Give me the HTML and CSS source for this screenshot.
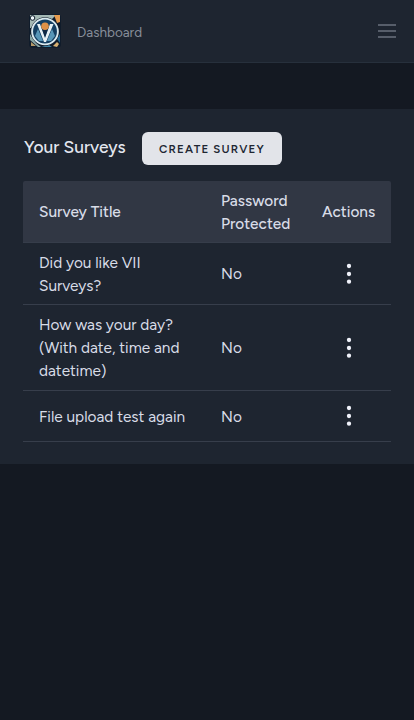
FILE: index.html
```html
<!DOCTYPE html>
<html lang="en">
<head>
<meta charset="utf-8">
<meta name="viewport" content="width=device-width, initial-scale=1">
<title>Dashboard</title>
<link rel="stylesheet" href="styles.css">
</head>
<body>
<header class="topbar">
  <svg class="logo" viewBox="0 0 32 34" aria-hidden="true">
    <defs><clipPath id="tile"><rect width="32" height="34" rx="4"/></clipPath></defs>
    <g clip-path="url(#tile)">
      <rect width="32" height="34" fill="#101c2b"/>
      <path d="M1 1H27L22 6H10L2 14H1Z" fill="#a4b8b4"/>
      <path d="M25 1H31V8L28 9Z" fill="#e59b4f"/>
      <path d="M1 20L7 29L12 33H9L1 26Z" fill="#87a5a4"/>
      <path d="M2 28L7 32H2Z" fill="#b49a69"/>
      <path d="M28 25L31 20V29Z" fill="#246992"/>
      <path d="M12 33L20 31L23 33Z" fill="#3c83a5"/>
      <path d="M24 32L28 28L30 30L28 33Z" fill="#d7b071"/>
      <circle cx="3.5" cy="4" r="2.3" fill="#eef6fa" stroke="#101c2b"/>
      <circle cx="16" cy="17.5" r="14.2" fill="#101c2b"/>
      <circle cx="16" cy="17.5" r="12.9" fill="#143f62" stroke="#d9e9ee" stroke-width="1.9"/>
      <path d="M6 22L9 15L14 27H10ZM26 22L23 15L18 27H22Z" fill="#5796b7"/>
      <path d="M8 10H11L16 24L21 10H24.5L17 28H15Z" fill="#e6f1f4"/>
      <path d="M12 12L16 23L20 12Z" fill="#102944"/>
      <circle cx="16" cy="12.3" r="3.8" fill="#dc9147"/>
    </g>
  </svg>
  <a class="nav-link">Dashboard</a>
  <svg class="menu" viewBox="0 0 18 16" aria-hidden="true"><path d="M0 2H18M0 8H18M0 14H18"/></svg>
</header>
<main class="panel">
  <div class="heading">
    <h1>Your Surveys</h1>
    <button class="create">CREATE SURVEY</button>
  </div>
  <div class="table">
    <div class="row head">
      <div>Survey Title</div><div>Password<br>Protected</div><div>Actions</div>
    </div>
    <div class="row">
      <div>Did you like VII<br>Surveys?</div><div>No</div>
      <svg class="dots" viewBox="0 0 6 22" aria-hidden="true"><circle cx="3" cy="3" r="2.15"/><circle cx="3" cy="11" r="2.15"/><circle cx="3" cy="18.7" r="2.15"/></svg>
    </div>
    <div class="row tall">
      <div>How was your day?<br>(With date, time and<br>datetime)</div><div>No</div>
      <svg class="dots" viewBox="0 0 6 22" aria-hidden="true"><circle cx="3" cy="3" r="2.15"/><circle cx="3" cy="11" r="2.15"/><circle cx="3" cy="18.7" r="2.15"/></svg>
    </div>
    <div class="row short">
      <div>File upload test again</div><div>No</div>
      <svg class="dots" viewBox="0 0 6 22" aria-hidden="true"><circle cx="3" cy="3" r="2.15"/><circle cx="3" cy="11" r="2.15"/><circle cx="3" cy="18.7" r="2.15"/></svg>
    </div>
  </div>
</main>
</body>
</html>
```
FILE: styles.css
```css
* { box-sizing: border-box; }
body {
  margin: 0;
  min-height: 720px;
  background: #141922;
  color: #d8dce7;
  font-family: Figtree, Lato, "Open Sans", sans-serif;
}
.topbar {
  display: flex;
  align-items: center;
  height: 63px;
  padding: 0 18px 0 29px;
  background: #1e2530;
  border-bottom: 1px solid #27303c;
}
.logo { width: 32px; height: 34px; }
.nav-link {
  margin-left: 16px;
  padding-top: 2px;
  color: #868d99;
  font-size: 13.5px;
}
.menu { width: 18px; height: 16px; margin-left: auto; }
.menu path { stroke: #6b727e; stroke-width: 1.7; }
.panel {
  height: 355px;
  margin-top: 46px;
  padding: 23px 23px 0;
  background: #1e2530;
}
.heading { display: flex; align-items: center; height: 33px; }
h1 {
  width: 119px;
  margin: 0;
  padding-left: 1px;
  padding-bottom: 3px;
  font-size: 17.35px;
  font-weight: 500;
  white-space: nowrap;
  color: #e3e7ef;
}
.create {
  width: 140px;
  height: 33px;
  padding: 0;
  border: 0;
  border-radius: 6px;
  background: #e2e4e9;
  color: #202632;
  font: 600 11.5px Figtree, Lato, sans-serif;
  letter-spacing: 1.15px;
}
.table { margin-top: 16px; }
.row {
  display: grid;
  grid-template-columns: 182px 101px 1fr;
  align-items: center;
  height: 62px;
  padding-left: 16px;
  border-bottom: 1px solid #373e4b;
  font-size: 15.4px;
  line-height: 23px;
  white-space: nowrap;
}
.head {
  background: #313744;
  border-color: #363d4a;
  border-radius: 2px 2px 0 0;
  font-weight: 500;
}
.tall { height: 86px; }
.short { height: 51px; }
.dots { width: 6px; height: 22px; margin-left: 24px; fill: #f0f2fa; }
```
